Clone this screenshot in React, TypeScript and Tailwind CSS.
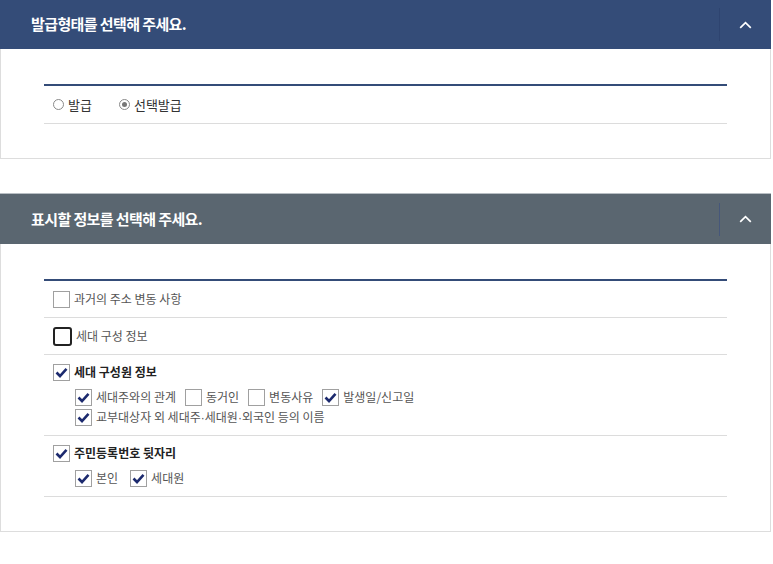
import type { ReactNode } from "react"

const FONT = { fontFamily: '"Noto Sans CJK KR", "Noto Sans", sans-serif' }
const DOT = { fontFamily: '"Liberation Sans", sans-serif' }

function Chevron() {
  return (
    <svg width="13" height="8" viewBox="0 0 13 8" fill="none" aria-hidden="true">
      <path d="M1.2 6.8 L6.5 1.6 L11.8 6.8" stroke="#ffffff" strokeWidth="1.7" />
    </svg>
  )
}

function PanelHeader({ title, bg, line, h }: { title: string; bg: string; line: string; h: string }) {
  return (
    <div className={`flex items-center ${h} ${bg}`}>
      <h2 className="flex-1 pl-[31px] text-[15px] font-bold tracking-[-0.6px] text-white">{title}</h2>
      <div className={`h-[33px] w-px ${line}`} />
      <button className="flex h-full w-[51px] items-center justify-center">
        <Chevron />
      </button>
    </div>
  )
}

function Radio({ checked, label }: { checked?: boolean; label: string }) {
  return (
    <label className="flex items-center gap-[4px] text-[13px] text-[#333]">
      <span className="flex h-[11px] w-[11px] items-center justify-center rounded-full border border-[#8a8a8a] bg-white">
        {checked && <span className="h-[5px] w-[5px] rounded-full bg-[#777]" />}
      </span>
      {label}
    </label>
  )
}

function Check({ checked, focused, label, bold }: { checked?: boolean; focused?: boolean; label: ReactNode; bold?: boolean }) {
  return (
    <label className={`flex items-center gap-[4px] text-[12px] ${bold ? "font-bold text-[#222]" : "text-[#555]"}`}>
      {focused ? (
        <span className="h-[19px] w-[19px] rounded-[3px] border-2 border-[#222] bg-white" />
      ) : (
        <span className="flex h-[17px] w-[17px] items-center justify-center border border-[#a0a0a0] bg-white">
          {checked && (
            <svg width="13" height="11" viewBox="0 0 13 11" aria-hidden="true">
              <path d="M1.5 5.5 L5 9 L11.5 1.8" stroke="#1c2a6e" strokeWidth="2.6" fill="none" />
            </svg>
          )}
        </span>
      )}
      {label}
    </label>
  )
}

function Row({ children, className }: { children: ReactNode; className: string }) {
  return <div className={`border-b border-[#dcdcdc] pl-[9px] ${className}`}>{children}</div>
}

export default function App() {
  return (
    <div className="w-[771px] bg-white" style={FONT}>
      <section>
        <PanelHeader title="발급형태를 선택해 주세요." bg="bg-[#344c78]" line="bg-[#2e4470]" h="h-[49px]" />
        <div className="border-x border-b border-[#dddddd] px-[43px] pt-[35px] pb-[34px]">
          <div className="border-t-2 border-[#344c78]">
            <Row className="flex h-[38px] items-center gap-[27px] pl-[8px]">
              <Radio label="발급" />
              <Radio checked label="선택발급" />
            </Row>
          </div>
        </div>
      </section>

      <section className="mt-[34px] border-t border-[#b8bec3]">
        <PanelHeader title="표시할 정보를 선택해 주세요." bg="bg-[#5a6670]" line="bg-[#46577a]" h="h-[50px]" />
        <div className="border-x border-b border-[#dddddd] px-[43px] pt-[35px] pb-[34px]">
          <div className="border-t-2 border-[#344c78]">
            <Row className="flex h-[37px] items-center">
              <Check label="과거의 주소 변동 사항" />
            </Row>
            <Row className="flex h-[37px] items-center pl-[8px]">
              <Check focused label="세대 구성 정보" />
            </Row>
            <Row className="h-[81px] pt-[8px]">
              <Check checked bold label="세대 구성원 정보" />
              <div className="mt-[7px] flex flex-col gap-[2px] pl-[22px]">
                <div className="flex items-center gap-[9px]">
                  <Check checked label="세대주와의 관계" />
                  <Check label="동거인" />
                  <Check label="변동사유" />
                  <Check checked label="발생일/신고일" />
                </div>
                <Check
                  checked
                  label={
                    <span>
                      교부대상자 외 세대주<span style={DOT}>·</span>세대원<span style={DOT}>·</span>외국인 등의 이름
                    </span>
                  }
                />
              </div>
            </Row>
            <Row className="h-[61px] pt-[8px]">
              <Check checked bold label="주민등록번호 뒷자리" />
              <div className="mt-[7px] flex items-center gap-[12px] pl-[22px]">
                <Check checked label="본인" />
                <Check checked label="세대원" />
              </div>
            </Row>
          </div>
        </div>
      </section>
    </div>
  )
}
